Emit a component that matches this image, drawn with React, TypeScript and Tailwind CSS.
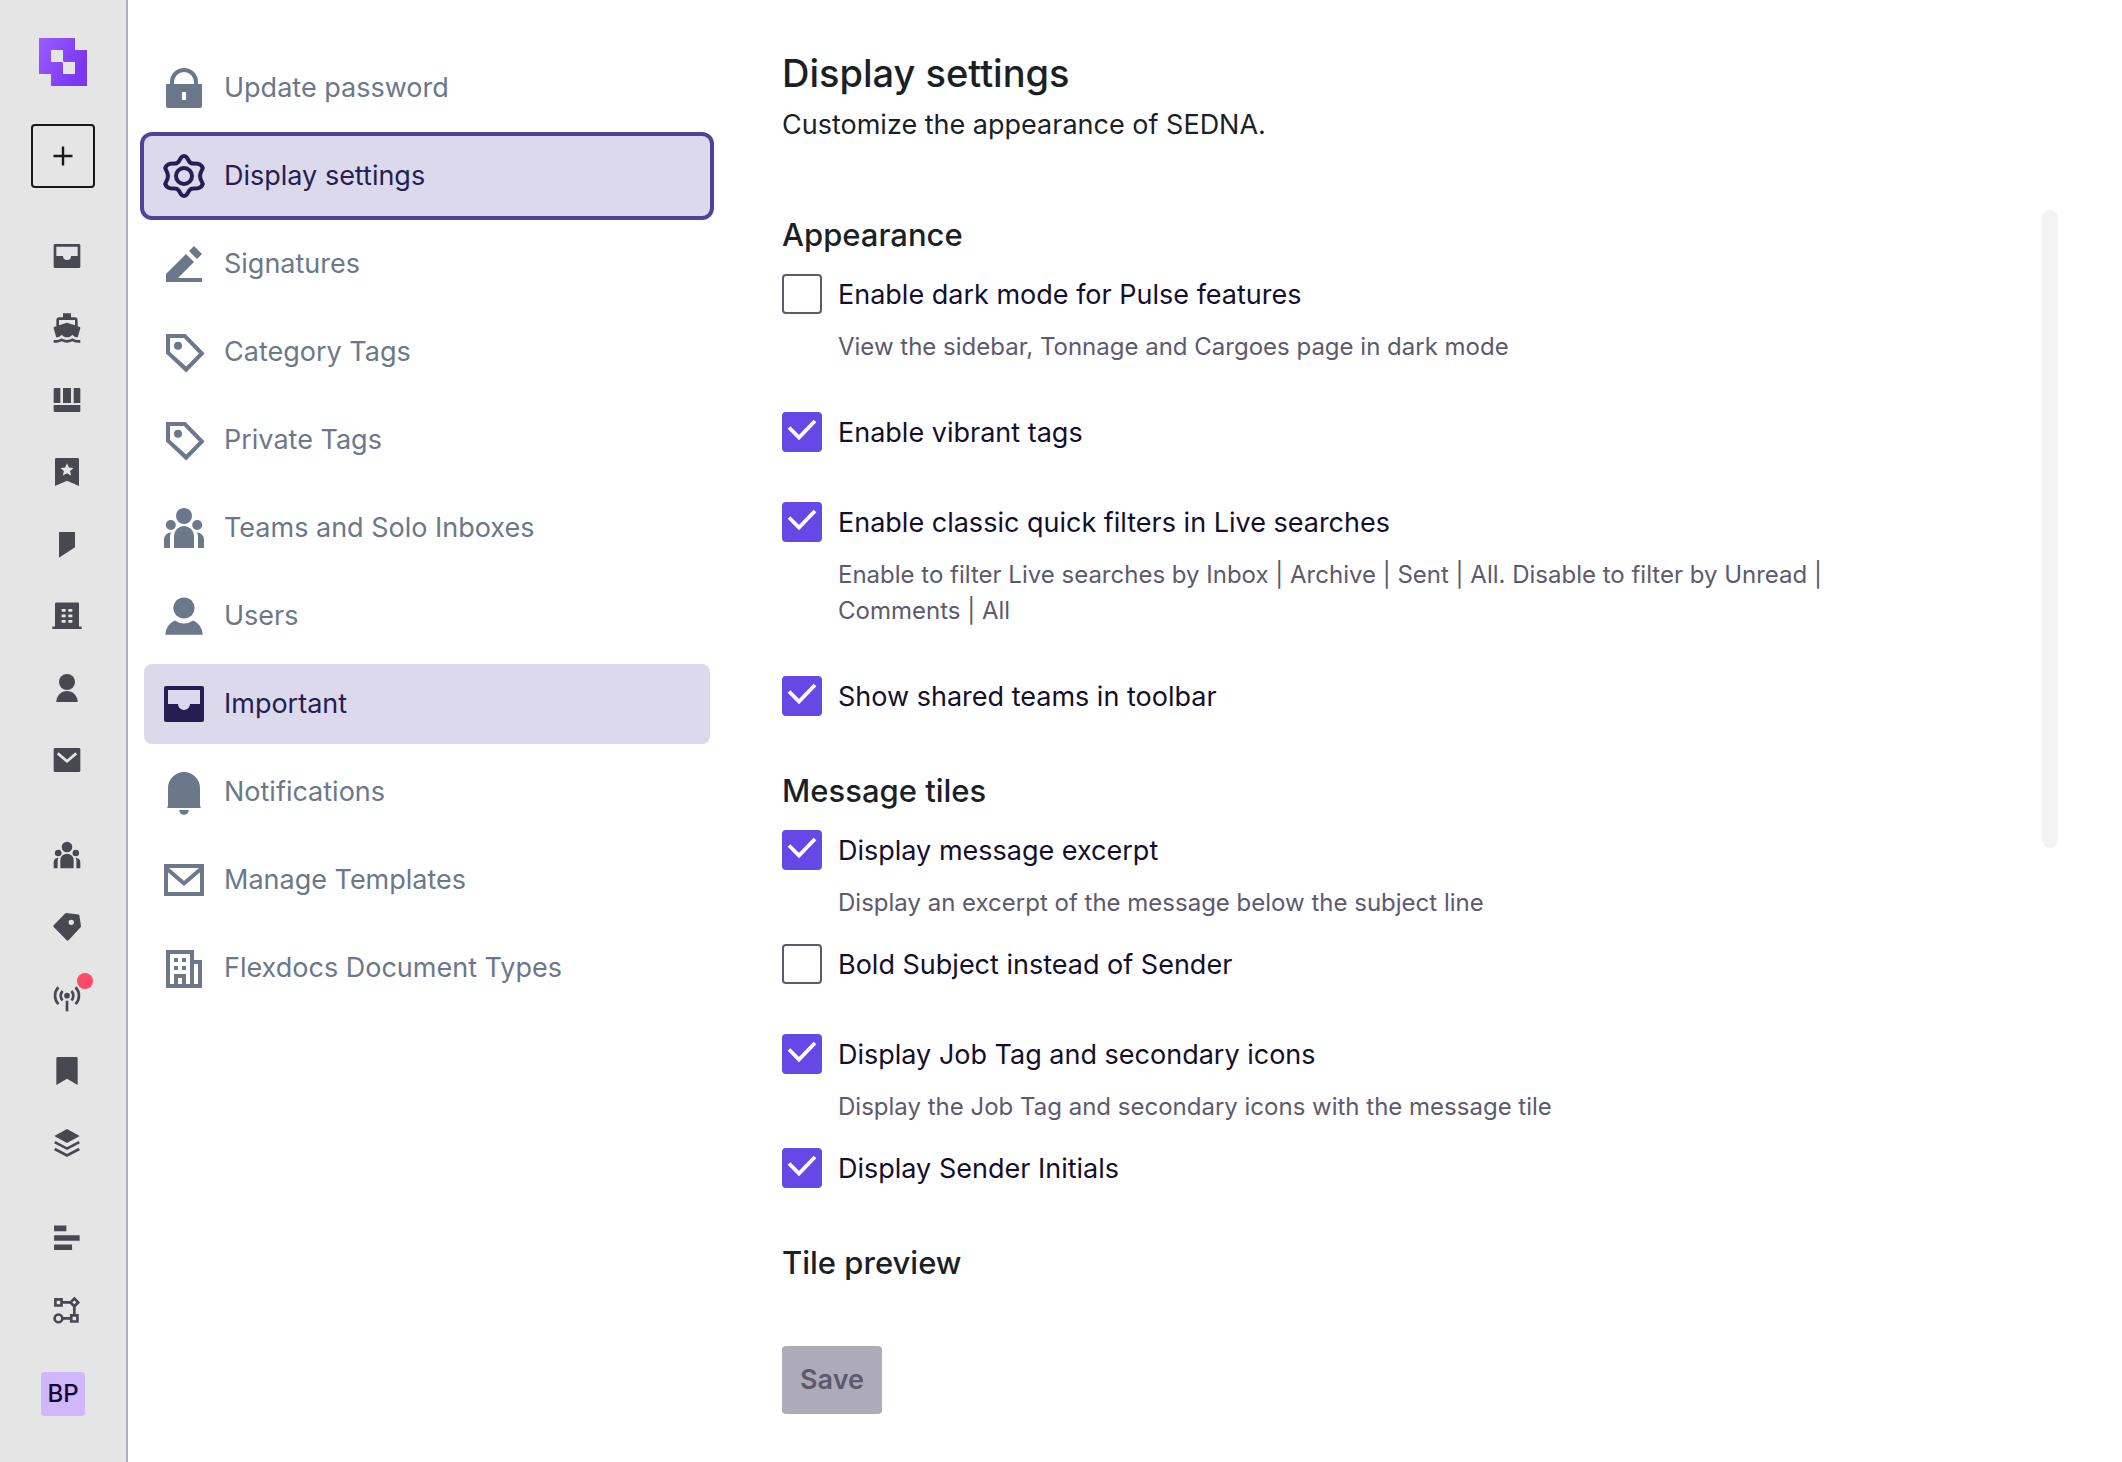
import React, { useState } from 'react';
import { MdDirectionsBoat } from 'react-icons/md';

type IconProps = { className?: string };

const Svg = ({ className, children }: IconProps & { children: React.ReactNode }) => (
  <svg viewBox="0 0 24 24" fill="currentColor" aria-hidden="true" className={className}>
    {children}
  </svg>
);

const InboxIcon = ({ className }: IconProps) => (
  <Svg className={className}>
    <path
      fillRule="evenodd"
      d="M3 3h18a1 1 0 0 1 1 1v16a1 1 0 0 1-1 1H3a1 1 0 0 1-1-1V4a1 1 0 0 1 1-1zm1 2v7h5a3 3 0 0 0 6 0h5V5z"
    />
  </Svg>
);

const ContainerIcon = ({ className }: IconProps) => (
  <Svg className={className}>
    <path d="M2.6 3H7v11.2H2V3.6zM9 3h6v11.2H9zM17 3h4.4l.6.6v10.6h-5zM2 15.8h20v4.4a.8.8 0 0 1-.8.8H2.8a.8.8 0 0 1-.8-.8z" />
  </Svg>
);

const StarBookmarkIcon = ({ className }: IconProps) => (
  <Svg className={className}>
    <path
      fillRule="evenodd"
      d="M4 1.500h16a1 1 0 0 1 1 1v20l-9-4-9 4v-20a1 1 0 0 1 1-1zm8 4l-1.400 3.200-3.500.3 2.600 2.300-.8 3.400 3.100-1.800 3.100 1.800-.8-3.400 2.600-2.300-3.500-.3z"
    />
  </Svg>
);

const FlagIcon = ({ className }: IconProps) => (
  <Svg className={className}>
    <path d="M6 3h12v11.500L6 22.300z" />
  </Svg>
);

const OfficeIcon = ({ className }: IconProps) => (
  <Svg className={className}>
    <path
      fillRule="evenodd"
      d="M4 1.800h16a1 1 0 0 1 1 1v17h2v2H1v-2h2v-17a1 1 0 0 1 1-1zm4 5v2h3v-2zm5 0v2h3v-2zm-5 4.100v2h3v-2zm5 0v2h3v-2zM8 15v2h3v-2zm5 0v2h3v-2z"
    />
  </Svg>
);

const PersonIcon = ({ className }: IconProps) => (
  <Svg className={className}>
    <circle cx="12" cy="7.500" r="6" />
    <path d="M4 22.500a8 8.200 0 0 1 16 0z" />
  </Svg>
);

const MailSolidIcon = ({ className }: IconProps) => (
  <Svg className={className}>
    <path
      fillRule="evenodd"
      d="M3 3h18a1 1 0 0 1 1 1v16a1 1 0 0 1-1 1H3a1 1 0 0 1-1-1V4a1 1 0 0 1 1-1zm2.700 3.200L4.400 7.800l7.600 6.400 7.600-6.400-1.300-1.600L12 11.600z"
    />
  </Svg>
);

const TeamIcon = ({ className }: IconProps) => (
  <Svg className={className}>
    <circle cx="12" cy="6" r="4" />
    <circle cx="5.400" cy="10.500" r="2.500" />
    <circle cx="18.600" cy="10.500" r="2.500" />
    <path d="M7 22v-6a5 5 0 0 1 10 0v6zM2 22v-4.300a3.700 3.700 0 0 1 3.500-3.600A6 6 0 0 0 5 16.500V22zM22 22v-4.300a3.700 3.700 0 0 0-3.500-3.600 6 6 0 0 1 .5 2.400V22z" />
  </Svg>
);

const TagSolidIcon = ({ className }: IconProps) => (
  <Svg className={className}>
    <path
      fillRule="evenodd"
      d="M11.500 1.500l9 1.200a1 1 0 0 1 .8.8l1.200 7.700a1.200 1.200 0 0 1-.3 1L13.200 22a1 1 0 0 1-1.400 0L2 12a1 1 0 0 1 0-1.400l8.600-8.700a1 1 0 0 1 .9-.4zm3.700 5a2 2 0 1 0 0 4 2 2 0 0 0 0-4z"
    />
  </Svg>
);

const BroadcastIcon = ({ className }: IconProps) => (
  <Svg className={className}>
    <circle cx="12" cy="9.500" r="2.100" />
    <path d="M11 13.300h2v8h-2z" />
    <path
      d="M8.700 6a5 5 0 0 0 0 7M15.300 6a5 5 0 0 1 0 7M5.600 3.200a9 9 0 0 0 0 12.600M18.400 3.200a9 9 0 0 1 0 12.600"
      fill="none"
      stroke="currentColor"
      strokeWidth="2"
    />
  </Svg>
);

const BookmarkIcon = ({ className }: IconProps) => (
  <Svg className={className}>
    <path d="M5 1.500h14a1 1 0 0 1 1 1v20l-8-4.700-8 4.700v-20a1 1 0 0 1 1-1z" />
  </Svg>
);

const LayersIcon = ({ className }: IconProps) => (
  <Svg className={className}>
    <path d="M12 1.500l9.500 5.300L12 12 2.500 6.800z" />
    <path
      d="M2.800 11.300L12 16.200l9.200-4.900M2.800 16.500l9.200 4.900 9.200-4.900"
      fill="none"
      stroke="currentColor"
      strokeWidth="2"
    />
  </Svg>
);

const BarsIcon = ({ className }: IconProps) => (
  <Svg className={className}>
    <path d="M2.300 2.700h9.200v4.200H2.300zM2.300 9.900h19.200v4.200H2.300zM2.300 16.800h13.500V21H2.300z" />
  </Svg>
);

const WorkflowIcon = ({ className }: IconProps) => (
  <Svg className={className}>
    <g fill="none" stroke="currentColor" strokeWidth="2">
      <path d="M3.300 4h4.600v4.600H3.300zM15.200 16h4.600v4.600h-4.600zM17.500 3.400l2.900 2.900-2.900 2.900-2.900-2.900z" />
      <circle cx="5.600" cy="18.300" r="2.900" />
      <path d="M7.900 6.300h6.800M17.500 9.100V16M8.500 18.300h6.700" />
    </g>
  </Svg>
);

const LockIcon = ({ className }: IconProps) => (
  <Svg className={className}>
    <path d="M6 11V9a6 6 0 0 1 12 0v2" fill="none" stroke="currentColor" strokeWidth="2" />
    <path fillRule="evenodd" d="M3 10h18v11a1 1 0 0 1-1 1H4a1 1 0 0 1-1-1zm8 4v4h2v-4z" />
  </Svg>
);

const GearIcon = ({ className }: IconProps) => (
  <Svg className={className}>
    <g fill="none" stroke="currentColor" strokeWidth="2" strokeLinejoin="round">
      <circle cx="12" cy="12" r="4" />
      <path d="M10.700 2.600Q12 1.400 13.300 2.600L14.600 4.700Q15.300 5.800 16.600 5.800L19.100 5.900Q20.800 6.400 21.400 8L20.300 10.500Q19.700 12 20.300 13.500L21.400 16Q20.800 17.600 19.100 18.100L16.600 18.200Q15.300 18.200 14.600 19.300L13.300 21.400Q12 22.600 10.700 21.400L9.400 19.300Q8.700 18.200 7.400 18.200L4.900 18.100Q3.200 17.600 2.600 16L3.700 13.500Q4.300 12 3.700 10.500L2.600 8Q3.200 6.400 4.900 5.900L7.400 5.800Q8.700 5.800 9.400 4.700z" />
    </g>
  </Svg>
);

const PencilIcon = ({ className }: IconProps) => (
  <Svg className={className}>
    <path d="M3 21v-4L13 7l4 4-8 8h12v2zM14.500 5.500L17 3l4 4-2.500 2.500z" />
  </Svg>
);

const TagIcon = ({ className }: IconProps) => (
  <Svg className={className}>
    <path fillRule="evenodd" d="M3 3h9.800l9.500 9.700-9.200 9.500L3 12.800zm2 2v7l8.100 7.300 6.400-6.600L12 5z" />
    <circle cx="9" cy="8.900" r="2" />
  </Svg>
);

const UserIcon = ({ className }: IconProps) => (
  <Svg className={className}>
    <circle cx="12" cy="8" r="5.300" />
    <path d="M7.400 14.300a8.500 8.500 0 0 0-4.800 7.100h18.800a8.500 8.500 0 0 0-4.800-7.100 8 8 0 0 1-9.200 0z" />
  </Svg>
);

const BellIcon = ({ className }: IconProps) => (
  <Svg className={className}>
    <path d="M4 18.800V10a8 8 0 0 1 16 0v8.800l.4 1.200H3.600zM9.600 21h4.800a2.400 2.400 0 0 1-4.800 0z" />
  </Svg>
);

const MailIcon = ({ className }: IconProps) => (
  <Svg className={className}>
    <path d="M3 5h18v14H3zM3 6l9 7.700L21 6" fill="none" stroke="currentColor" strokeWidth="2" />
  </Svg>
);

const BuildingIcon = ({ className }: IconProps) => (
  <Svg className={className}>
    <path
      fillRule="evenodd"
      d="M3 3h14v5h4v14H3zm2 2v15h2v-5h6v5h2V5zm4 12v3h2v-3zm8-7v10h2V10zM7 7h2v2H7zm4 0h2v2h-2zm-4 4h2v2H7zm4 0h2v2h-2z"
    />
  </Svg>
);

const railGroups = [
  [
    { label: 'Inbox', icon: InboxIcon },
    { label: 'Vessels', icon: MdDirectionsBoat },
    { label: 'Cargoes', icon: ContainerIcon },
    { label: 'Saved searches', icon: StarBookmarkIcon },
    { label: 'Flags', icon: FlagIcon },
    { label: 'Companies', icon: OfficeIcon },
    { label: 'Contacts', icon: PersonIcon },
    { label: 'Mail', icon: MailSolidIcon }
  ],
  [
    { label: 'Teams', icon: TeamIcon },
    { label: 'Tags', icon: TagSolidIcon },
    { label: 'Live searches', icon: BroadcastIcon, alert: true },
    { label: 'Bookmarks', icon: BookmarkIcon },
    { label: 'Layers', icon: LayersIcon }
  ],
  [
    { label: 'Reports', icon: BarsIcon },
    { label: 'Workflows', icon: WorkflowIcon }
  ]
];

const settingsLinks = [
  { label: 'Update password', icon: LockIcon },
  { label: 'Display settings', icon: GearIcon, active: true, focused: true },
  { label: 'Signatures', icon: PencilIcon },
  { label: 'Category Tags', icon: TagIcon },
  { label: 'Private Tags', icon: TagIcon },
  { label: 'Teams and Solo Inboxes', icon: TeamIcon },
  { label: 'Users', icon: UserIcon },
  { label: 'Important', icon: InboxIcon, active: true },
  { label: 'Notifications', icon: BellIcon },
  { label: 'Manage Templates', icon: MailIcon },
  { label: 'Flexdocs Document Types', icon: BuildingIcon }
];

type Option = { id: string; label: string; help?: string; checked: boolean; compact?: boolean };

const appearance: Option[] = [
  {
    id: 'dark-mode',
    label: 'Enable dark mode for Pulse features',
    help: 'View the sidebar, Tonnage and Cargoes page in dark mode',
    checked: false
  },
  { id: 'vibrant-tags', label: 'Enable vibrant tags', checked: true },
  {
    id: 'quick-filters',
    label: 'Enable classic quick filters in Live searches',
    help: 'Enable to filter Live searches by Inbox | Archive | Sent | All. Disable to filter by Unread | Comments | All',
    checked: true
  },
  { id: 'shared-teams', label: 'Show shared teams in toolbar', checked: true }
];

const messageTiles: Option[] = [
  {
    id: 'excerpt',
    label: 'Display message excerpt',
    help: 'Display an excerpt of the message below the subject line',
    checked: true,
    compact: true
  },
  { id: 'bold-subject', label: 'Bold Subject instead of Sender', checked: false },
  {
    id: 'job-tag',
    label: 'Display Job Tag and secondary icons',
    help: 'Display the Job Tag and secondary icons with the message tile',
    checked: true,
    compact: true
  },
  { id: 'initials', label: 'Display Sender Initials', checked: true }
];

const Rail = () => (
  <aside className="w-32 shrink-0 flex flex-col items-center bg-[#e5e5e6] border-r-2 border-[#afadb9] pt-[38px] pb-[46px]">
    <a href="#home" aria-label="Home">
      <svg viewBox="0 0 48 48" className="w-12 h-12" aria-hidden="true">
        <defs>
          <linearGradient id="logo" x1="0" y1="0" x2="1" y2="0.5">
            <stop offset="0" stopColor="#9a5cff" />
            <stop offset="1" stopColor="#7a36f0" />
          </linearGradient>
        </defs>
        <path
          fill="url(#logo)"
          fillRule="evenodd"
          d="M0 0h36v12h12v36H12V36H0zM12 12v12h11l1 1v11h12V24H25l-1-1V12z"
        />
      </svg>
    </a>
    <button
      type="button"
      aria-label="Create"
      className="mt-[38px] w-16 h-16 flex items-center justify-center border-2 border-[#18181b] rounded text-[#18181b]"
    >
      <svg viewBox="0 0 20 20" className="w-5 h-5" fill="none" stroke="currentColor" strokeWidth="2.4" aria-hidden="true">
        <path d="M10 .5v19M.5 10h19" />
      </svg>
    </button>
    <nav className="mt-8 pl-2 flex flex-col gap-[23px]" aria-label="Main">
      {railGroups.map((group, groupIndex) => (
        <div key={groupIndex} className="flex flex-col">
          {group.map((item) => {
            const IconComponent = item.icon;
            return (
              <a
                key={item.label}
                href="#rail"
                aria-label={item.label}
                className="relative w-[72px] h-[72px] flex items-center justify-center text-[#484850]"
              >
                <IconComponent className="w-8 h-8" />
                {item.alert && <span className="absolute top-[10px] right-[10px] w-4 h-4 rounded-full bg-[#ff4a6b]" />}
              </a>
            );
          })}
        </div>
      ))}
    </nav>
    <button
      type="button"
      className="mt-auto w-11 h-11 rounded bg-[#d0b6fb] text-[#16062f] text-2xl font-medium"
    >
      BP
    </button>
  </aside>
);

const SettingsNav = () => (
  <nav className="w-[566px] shrink-0 ml-4 mt-12 flex flex-col gap-2" aria-label="Settings">
    {settingsLinks.map((link) => {
      const IconComponent = link.icon;
      return (
        <a
          key={link.label}
          href="#settings"
          className={`h-20 px-4 flex items-center gap-4 rounded-lg text-[27px] leading-10 ${
            link.active ? 'bg-[#dcd9ed] text-[#261d52]' : 'text-[#6b788b]'
          } ${link.focused ? 'ring-4 ring-[#50419a]' : ''}`}
        >
          <IconComponent className="w-12 h-12 shrink-0" />
          {link.label}
        </a>
      );
    })}
  </nav>
);

const OptionRow = ({ option }: { option: Option }) => {
  const [checked, setChecked] = useState(option.checked);
  return (
    <div className={option.help ? (option.compact ? 'pb-[23px]' : 'pb-[47px]') : 'pb-[49px]'}>
      <div className="flex items-start gap-4">
        <span className="grid shrink-0">
          <input
            id={option.id}
            type="checkbox"
            checked={checked}
            onChange={(e) => setChecked(e.target.checked)}
            className="col-start-1 row-start-1 w-10 h-10 appearance-none rounded border-2 border-[#5d596e] bg-white checked:border-[#6549e6] checked:bg-[#6549e6]"
          />
          {checked && (
            <svg
              viewBox="0 0 40 40"
              className="col-start-1 row-start-1 w-10 h-10 pointer-events-none"
              fill="none"
              stroke="#fff"
              strokeWidth="3.8"
              aria-hidden="true"
            >
              <path d="M7 15.500l10 10L33 9" />
            </svg>
          )}
        </span>
        <label htmlFor={option.id} className="pt-px text-[27px] leading-10 text-[#150f2d]">
          {option.label}
        </label>
      </div>
      {option.help && (
        <p className="mt-[14px] ml-14 max-w-5xl text-2xl leading-9 text-[#5d596e]">{option.help}</p>
      )}
    </div>
  );
};

const SectionTitle = ({ children }: { children: React.ReactNode }) => (
  <h2 className="text-[31px] leading-10 font-medium text-[#1b1f26]">{children}</h2>
);

export default function App() {
  return (
    <div className="min-h-screen flex bg-white font-['Inter',sans-serif]">
      <Rail />
      <SettingsNav />

      <main className="flex-1 min-w-0 ml-18 pr-16 pt-[49px] pb-12 flex flex-col">
        <h1 className="text-[38px] leading-12 font-medium text-[#1b1f26]">Display settings</h1>
        <p className="mt-2 text-[27px] leading-10 text-[#1b1f26]">Customize the appearance of SEDNA.</p>

        <div className="mt-[65px] flex items-start justify-between">
          <form className="flex-1 pt-[5px]">
            {/* Appearance */}
            <SectionTitle>Appearance</SectionTitle>
            <div className="pt-[19px] pb-[5px]">
              {appearance.map((option) => (
                <OptionRow key={option.id} option={option} />
              ))}
            </div>

            {/* Message tiles */}
            <SectionTitle>Message tiles</SectionTitle>
            <div className="pt-[19px] pb-[5px]">
              {messageTiles.map((option) => (
                <OptionRow key={option.id} option={option} />
              ))}
            </div>

            <SectionTitle>Tile preview</SectionTitle>
          </form>
          {/* Scroll thumb */}
          <div className="w-4 h-[638px] rounded-full bg-[#f3f3f6]" />
        </div>

        <button
          type="button"
          disabled
          className="mt-auto w-[100px] h-[68px] rounded bg-[#aeabb8] text-[27px] font-semibold text-[#5d596e]"
        >
          Save
        </button>
      </main>
    </div>
  );
}
